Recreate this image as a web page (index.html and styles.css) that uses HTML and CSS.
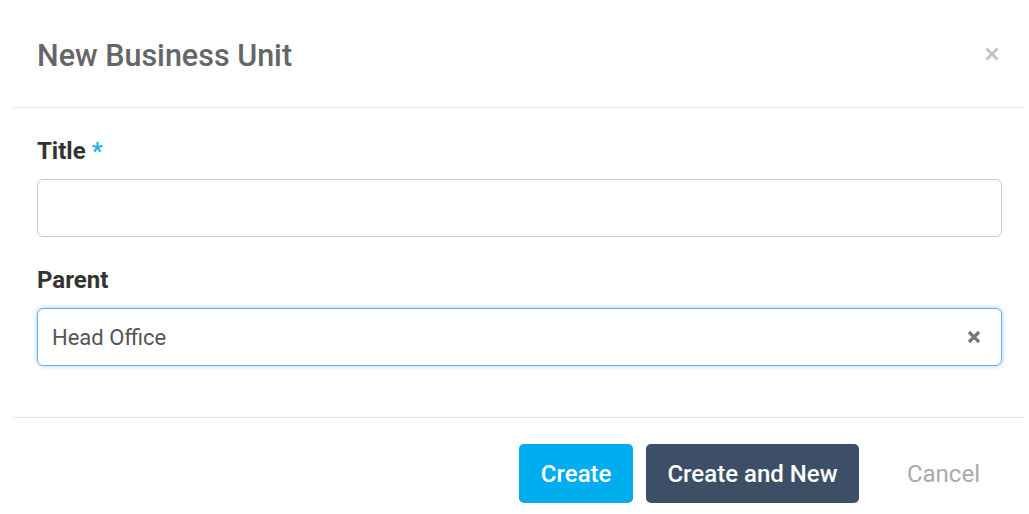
FILE: index.html
```html
<!DOCTYPE html>
<html lang="en">
<head>
<meta charset="utf-8">
<title>New Business Unit</title>
<link rel="stylesheet" href="styles.css">
</head>
<body>
<div class="modal">
  <div class="modal-header">
    <h4 class="modal-title">New Business Unit</h4>
    <button class="close" type="button" aria-label="Close">
      <svg width="16" height="16" viewBox="0 0 16 16"><path d="M2.5 2.5L13.5 13.5M13.5 2.5L2.5 13.5" stroke="#c4c4c4" stroke-width="3" stroke-linecap="butt" fill="none"/></svg>
    </button>
  </div>
  <div class="modal-body">
    <div class="form-group">
      <label class="label">Title <span class="req">*</span></label>
      <div class="input"></div>
    </div>
    <div class="form-group last">
      <label class="label">Parent</label>
      <div class="input focus">
        <span class="value">Head Office</span>
        <svg class="clear" width="14" height="14" viewBox="0 0 14 14"><path d="M2 2L12 12M12 2L2 12" stroke="#777" stroke-width="3.2" fill="none"/></svg>
      </div>
    </div>
  </div>
  <div class="modal-footer">
    <button class="btn btn-primary" type="button">Create</button>
    <button class="btn btn-dark" type="button">Create and New</button>
    <button class="btn btn-link" type="button">Cancel</button>
  </div>
</div>
</body>
</html>
```

FILE: styles.css
```css
html, body {
  margin: 0;
  padding: 0;
  background: #ffffff;
}
body {
  font-family: Roboto, "Liberation Sans", Arial, sans-serif;
  color: #333333;
}
.modal {
  margin-left: 14px;
  width: 1010px;
}
.modal-header {
  display: flex;
  align-items: flex-start;
  justify-content: space-between;
  height: 108px;
  box-sizing: border-box;
  padding: 41px 24px 0 23px;
  border-bottom: 1px solid #e5e5e5;
}
.modal-title {
  margin: 0;
  font-size: 30.5px;
  line-height: 30px;
  font-weight: 500;
  color: #666666;
}
.close {
  margin-top: 5px;
  padding: 0;
  border: 0;
  background: none;
  width: 16px;
  height: 16px;
  display: block;
}
.close svg { display: block; }
.modal-body {
  padding: 28px 22px 23px 23px;
}
.form-group {
  margin-bottom: 28px;
}
.label {
  display: block;
  font-size: 24px;
  line-height: 30px;
  font-weight: 700;
  color: #333333;
  margin-bottom: 13px;
}
.req {
  color: #1fb0e0;
}
.input {
  box-sizing: border-box;
  height: 58px;
  border: 1px solid #cccccc;
  border-radius: 6px;
  display: flex;
  align-items: center;
  padding: 0 20px 0 14px;
  font-size: 22px;
  color: #555555;
}
.input.focus {
  border-color: #66afe9;
  box-shadow: 0 0 5px rgba(102, 175, 233, 0.6);
}
.value {
  flex: 1;
}
.clear {
  display: block;
}
.modal-footer {
  border-top: 1px solid #e5e5e5;
  padding: 26px 22px 20px 23px;
  display: flex;
  justify-content: flex-end;
  align-items: center;
}
.btn {
  box-sizing: border-box;
  height: 59px;
  padding: 0 21.5px;
  border: 0;
  border-radius: 5px;
  font-family: Roboto, "Liberation Sans", Arial, sans-serif;
  font-size: 24px;
  font-weight: 500;
  display: flex;
  align-items: center;
}
.btn-primary {
  background: #00aeef;
  color: #ffffff;
}
.btn-dark {
  background: #3c4f66;
  color: #ffffff;
  margin-left: 13px;
}
.btn-link {
  background: none;
  color: #aaaaaa;
  font-weight: 400;
  padding: 0 22px;
  margin-left: 26px;
}
```
